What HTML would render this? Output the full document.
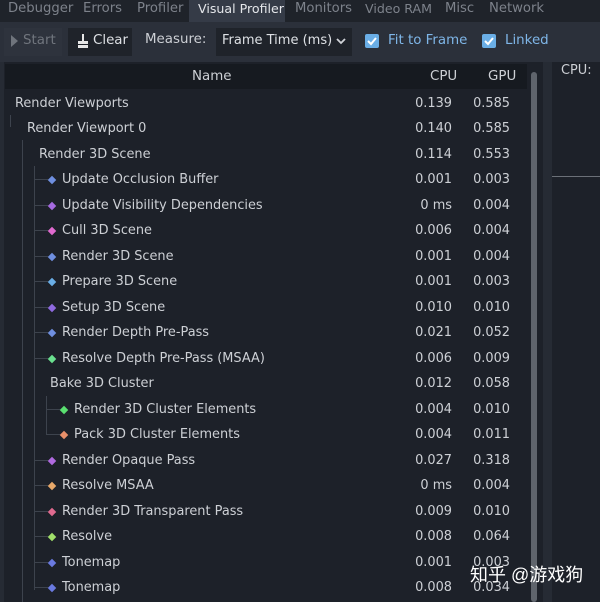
<!DOCTYPE html>
<html><head><meta charset="utf-8"><style>
*{margin:0;padding:0;box-sizing:border-box}
body{width:600px;height:602px;overflow:hidden;background:#262b34;font-family:"DejaVu Sans","Liberation Sans",sans-serif;font-size:12.9px;color:#cdd0d5;position:relative}
.a{position:absolute;white-space:nowrap}
.tab{top:0;height:22px;line-height:17px;color:#7d828b;font-size:13.2px}
.tb{font-size:13.4px}
.r{position:absolute;left:0;width:540px;height:25px;line-height:25px}
.n{position:absolute;white-space:nowrap}
.c{position:absolute;right:88px}
.g{position:absolute;right:30px}
.d{position:absolute;width:6px;height:6px;transform:rotate(45deg);top:10px}
.vl{position:absolute;width:1px;background:#3d434d}
.hl{position:absolute;height:1px;background:#3d434d}
</style></head><body>
<div class="a" style="left:0;top:0;width:600px;height:22px;background:#1f232a"></div>
<div class="a" style="left:189px;top:0;width:96px;height:22px;background:#353b47"></div>
<div class="a tab" style="left:8px">Debugger</div>
<div class="a tab" style="left:83px">Errors</div>
<div class="a tab" style="left:137px">Profiler</div>
<div class="a tab" style="left:198px;color:#e4e6ea;font-size:12.6px">Visual Profiler</div>
<div class="a tab" style="left:295px">Monitors</div>
<div class="a tab" style="left:365px;font-size:12.6px">Video RAM</div>
<div class="a tab" style="left:445px">Misc</div>
<div class="a tab" style="left:489px">Network</div>

<div class="a" style="left:0;top:22px;width:600px;height:40px;background:#2b303a"></div>
<div class="a" style="left:4px;top:28px;width:58px;height:28px;background:#2e333d"></div>
<div class="a" style="left:11px;top:35px;width:0;height:0;border-left:7px solid #6f747c;border-top:6px solid transparent;border-bottom:6px solid transparent"></div>
<div class="a tb" style="left:23px;top:32px;line-height:18px;color:#70757d">Start</div>
<div class="a" style="left:68px;top:28px;width:64px;height:28px;background:#1f232a"></div>
<svg class="a" style="left:77px;top:33px" width="12" height="16" viewBox="0 0 12 16"><rect x="5" y="1" width="2" height="7" fill="#e6e6e6"/><rect x="1" y="8" width="10" height="3" fill="#e6e6e6"/><rect x="1" y="12" width="10" height="3" fill="#e6e6e6"/></svg>
<div class="a tb" style="left:93px;top:32px;line-height:18px;color:#dde0e4">Clear</div>
<div class="a tb" style="left:145px;top:31px;line-height:18px;color:#cdd0d5">Measure:</div>
<div class="a" style="left:216px;top:28px;width:136px;height:28px;background:#1f232a"></div>
<div class="a tb" style="left:222px;top:32px;line-height:18px;color:#dde0e4;font-size:13px">Frame Time (ms)</div>
<svg class="a" style="left:336px;top:37px" width="10" height="8"><path d="M1 2 L5 6 L9 2" stroke="#d0d3d8" stroke-width="1.8" fill="none"/></svg>
<div class="a" style="left:365px;top:34px;width:14px;height:14px;background:#6aaee6;border-radius:2px"></div>
<svg class="a" style="left:365px;top:34px" width="14" height="14"><path d="M3 7 L6 10 L11 4" stroke="#fff" stroke-width="2" fill="none"/></svg>
<div class="a tb" style="left:388px;top:32px;line-height:18px;color:#7fb6e8">Fit to Frame</div>
<div class="a" style="left:482px;top:34px;width:14px;height:14px;background:#6aaee6;border-radius:2px"></div>
<svg class="a" style="left:482px;top:34px" width="14" height="14"><path d="M3 7 L6 10 L11 4" stroke="#fff" stroke-width="2" fill="none"/></svg>
<div class="a tb" style="left:505px;top:32px;line-height:18px;color:#7fb6e8">Linked</div>

<div class="a" style="left:4px;top:62px;width:539px;height:540px;background:#1d2129"></div>
<div class="a" style="left:5px;top:64px;width:522px;height:25px;background:#161a20"></div>
<div class="a tb" style="left:192px;top:68px;line-height:18px">Name</div>
<div class="a tb" style="left:430px;top:68px;line-height:18px">CPU</div>
<div class="a tb" style="left:488px;top:68px;line-height:18px">GPU</div>
<div class="a" style="left:531px;top:72px;width:6px;height:530px;background:#5f646c;border-radius:3px"></div>
<div class="a" style="left:552px;top:62px;width:48px;height:540px;background:#1d2129"></div>
<div class="a" style="left:552px;top:176px;width:48px;height:1px;background:#6b7078"></div>
<div class="a" style="left:561px;top:63px;line-height:16px">CPU:</div>

<div class="vl" style="left:10px;top:115px;height:12px"></div>
<div class="vl" style="left:22px;top:140px;height:462px"></div>
<div class="vl" style="left:34px;top:166px;height:424px"></div>
<div class="vl" style="left:46px;top:396px;height:38px"></div>

<div id="rows"></div>
<div class="a" style="left:470px;top:563px;line-height:24px;font-size:18px;color:#fff;font-family:'Liberation Sans','Noto Sans CJK SC',sans-serif">知乎 @游戏狗</div>
<script>
var R=[
[15,'Render Viewports','0.139','0.585'],
[27,'Render Viewport 0','0.140','0.585'],
[39,'Render 3D Scene','0.114','0.553'],
[62,'Update Occlusion Buffer','0.001','0.003','#6f8fe0'],
[62,'Update Visibility Dependencies','0 ms','0.004','#a56ae0'],
[62,'Cull 3D Scene','0.006','0.004','#e06ad0'],
[62,'Render 3D Scene','0.001','0.004','#6f8fe0'],
[62,'Prepare 3D Scene','0.001','0.003','#6aaee6'],
[62,'Setup 3D Scene','0.010','0.010','#8f6ae0'],
[62,'Render Depth Pre-Pass','0.021','0.052','#6f8fe0'],
[62,'Resolve Depth Pre-Pass (MSAA)','0.006','0.009','#6ae08f'],
[50,'Bake 3D Cluster','0.012','0.058'],
[74,'Render 3D Cluster Elements','0.004','0.010','#5ae070'],
[74,'Pack 3D Cluster Elements','0.004','0.011','#e88f6a'],
[62,'Render Opaque Pass','0.027','0.318','#b06ae0'],
[62,'Resolve MSAA','0 ms','0.004','#e8a86a'],
[62,'Render 3D Transparent Pass','0.009','0.010','#e06a8f'],
[62,'Resolve','0.008','0.064','#a0e06a'],
[62,'Tonemap','0.001','0.003','#6a7ae0'],
[62,'Tonemap','0.008','0.034','#6a7ae0']];
var h='';
R.forEach(function(r,i){var t=90.5+i*25.5;h+='<div class="r" style="top:'+t+'px">';
if(r[4]){var dx=r[0]-14;var lx=r[0]==74?46:34;h+='<div class="hl" style="left:'+lx+'px;top:12px;width:'+(dx-lx)+'px"></div><div class="d" style="left:'+(dx+1)+'px;background:'+r[4]+'"></div>';}
h+='<span class="n" style="left:'+r[0]+'px">'+r[1]+'</span><span class="c">'+r[2]+'</span><span class="g">'+r[3]+'</span></div>';});
document.getElementById('rows').innerHTML=h;
</script>
</body></html>
